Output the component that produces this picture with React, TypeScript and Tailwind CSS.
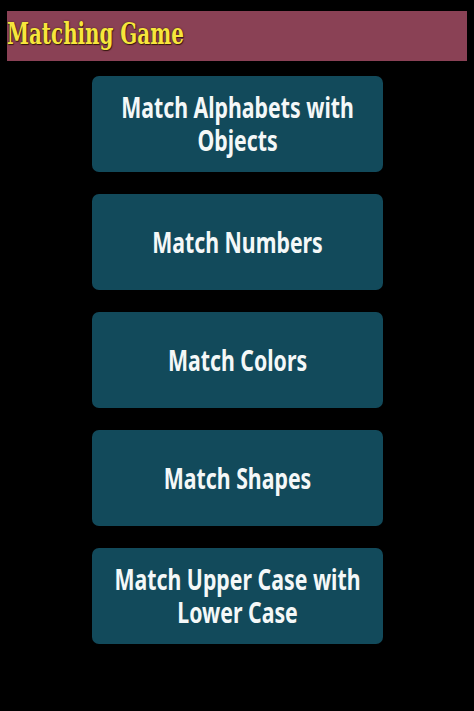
const items = [
  "Match Alphabets with Objects",
  "Match Numbers",
  "Match Colors",
  "Match Shapes",
  "Match Upper Case with Lower Case",
];

export default function App() {
  return (
    <div className="w-[474px] h-[711px] bg-black overflow-hidden">
      <div className="pt-[11px] px-[7px]">
        <div className="h-[50px] bg-[#8a4155] flex items-center pb-[4px]">
          <span
            className="inline-block origin-left scale-x-[0.685] text-[29px] font-bold text-[#f7e63c] leading-none whitespace-nowrap"
            style={{
              fontFamily: '"DejaVu Serif", serif',
              textShadow: "0 0 2px #3a1a10, 1px 1px 1px #3a1a10",
            }}
          >
            Matching Game
          </span>
        </div>
      </div>
      <div className="flex flex-col items-center gap-[22px] pt-[15px]">
        {items.map((label) => (
          <button
            key={label}
            className="w-[291px] h-[96px] rounded-[7px] bg-[#124a5b] flex items-center justify-center overflow-visible"
          >
            <span
              className="inline-block shrink-0 w-[345px] scale-x-[0.76] text-center text-[#f4f8f8] font-bold text-[28px] leading-[33px]"
              style={{ fontFamily: '"Noto Sans", sans-serif' }}
            >
              {label}
            </span>
          </button>
        ))}
      </div>
    </div>
  );
}
